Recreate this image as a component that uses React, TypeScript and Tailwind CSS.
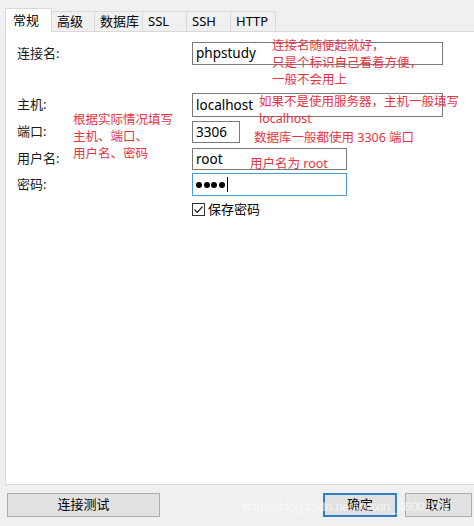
import React from "react";

const cjk = { fontFamily: '"Segoe UI", "Noto Sans", "Noto Sans CJK SC", sans-serif' };

const tabs = [
  { name: "常规", w: 47 },
  { name: "高级", w: 43 },
  { name: "数据库", w: 48 },
  { name: "SSL", w: 44 },
  { name: "SSH", w: 44 },
  { name: "HTTP", w: 45 },
];

// red hand-written notes lying over the dialog
function Note({ className, lines }: { className: string; lines: string[] }) {
  return (
    <div className={`absolute text-[12.5px] leading-[17px] text-[#e5343f] ${className}`}>
      {lines.map((l) => (
        <div key={l}>{l}</div>
      ))}
    </div>
  );
}

function Row({ label, mt, h, children }: { label: string; mt: string; h: string; children: React.ReactNode }) {
  return (
    <div className={`flex items-center ${mt} ${h}`}>
      <div className="w-[175px] text-[13px] text-[#1a1a1a]">{label}</div>
      {children}
    </div>
  );
}

export default function App() {
  return (
    <div className="relative w-[474px] h-[526px] bg-[#f0f0f0] overflow-hidden" style={cjk}>
      {/* tab strip */}
      <div className="flex items-end h-[31px] pl-[5px]">
        {tabs.map((t, i) =>
          i === 0 ? (
            <div
              key={t.name}
              className="relative z-10 h-[24px] -mb-px bg-white border border-b-0 border-[#d9d9d9] flex items-center pl-[7px] text-[13px] text-black"
              style={{ width: t.w }}
            >
              {t.name}
            </div>
          ) : (
            <div
              key={t.name}
              className="h-[20px] bg-[#f0f0f0] border border-l-0 border-b-0 border-[#d9d9d9] flex items-center pl-[5px] text-[13px] text-black"
              style={{ width: t.w }}
            >
              {t.name}
            </div>
          )
        )}
      </div>

      {/* panel */}
      <div className="ml-[5px] -mr-2 h-[454px] bg-white border border-[#d9d9d9] pl-[11px] pt-[10px]">
        <Row label="连接名:" mt="mt-0" h="h-[23px]">
          <div className="w-[251px] h-full border border-[#7a7a7a] flex items-center pl-[3px] text-[13.5px] text-black">phpstudy</div>
        </Row>
        <Row label="主机:" mt="mt-[28px]" h="h-[24px]">
          <div className="w-[251px] h-full border border-[#7a7a7a] flex items-center pl-[3px] text-[13.5px] text-black">localhost</div>
        </Row>
        <Row label="端口:" mt="mt-[4px]" h="h-[22px]">
          <div className="w-[48px] h-full border border-[#7a7a7a] flex items-center pl-[3px] text-[13.5px] text-black">3306</div>
        </Row>
        <Row label="用户名:" mt="mt-[5px]" h="h-[22px]">
          <div className="w-[155px] h-full border border-[#7a7a7a] flex items-center pl-[3px] text-[13.5px] text-black">root</div>
        </Row>
        <Row label="密码:" mt="mt-[3px]" h="h-[23px]">
          <div className="w-[155px] h-full border border-[#4d9ad6] flex items-center gap-[1.5px] pl-[3px]">
            {[0, 1, 2, 3].map((d) => (
              <span key={d} className="w-[6px] h-[6px] rounded-full bg-black" />
            ))}
            <span className="ml-[1px] w-px h-[15px] bg-black" />
          </div>
        </Row>
        <div className="flex items-center mt-[5px] ml-[175px] h-[17px]">
          <div className="w-[13px] h-[13px] border border-[#333] bg-white flex items-center justify-center">
            <svg width="11" height="11" viewBox="0 0 11 11">
              <path d="M1.5 5.5 L4.3 8.3 L9.5 2.5" fill="none" stroke="#222" strokeWidth="1.2" />
            </svg>
          </div>
          <span className="ml-[3px] text-[13px] text-black">保存密码</span>
        </div>
      </div>

      {/* buttons */}
      <div className="flex items-center mt-[8px] pl-[7px] pr-[2px]">
        <button className="w-[153px] h-[24px] bg-[#e1e1e1] border border-[#adadad] text-[13px] text-black">连接测试</button>
        <div className="flex-1" />
        <button className="w-[74px] h-[24px] bg-[#e1e1e1] border-2 border-[#2f7fc6] text-[13px] text-black">确定</button>
        <button className="ml-[8px] w-[67px] h-[24px] bg-[#e1e1e1] border border-[#adadad] text-[13px] text-black">取消</button>
      </div>

      <div className="absolute left-[243px] top-[497px] text-[13px] text-white/60 tracking-tight whitespace-nowrap" style={{ fontFamily: '"Liberation Sans", sans-serif' }}>
        https://blog.csdn.net/weixin_46001930
      </div>

      <Note className="left-[272px] top-[37px]" lines={["连接名随便起就好，", "只是个标识自己看着方便，", "一般不会用上"]} />
      <Note className="left-[259px] top-[93px]" lines={["如果不是使用服务器，主机一般填写", "localhost"]} />
      <Note className="left-[254px] top-[129px]" lines={["数据库一般都使用 3306 端口"]} />
      <Note className="left-[250px] top-[155px]" lines={["用户名为 root"]} />
      <Note className="left-[73px] top-[111px]" lines={["根据实际情况填写", "主机、端口、", "用户名、密码"]} />
    </div>
  );
}
